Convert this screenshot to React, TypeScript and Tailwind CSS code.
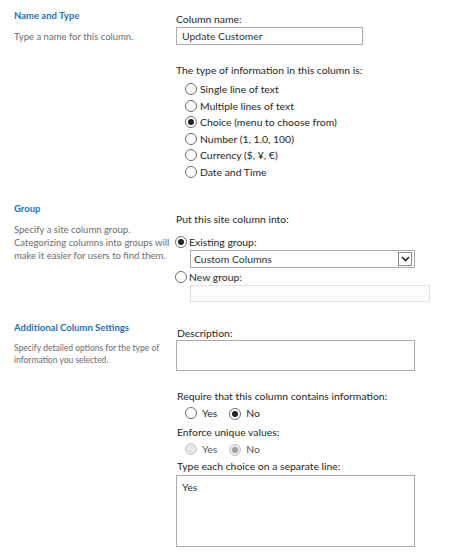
import React from 'react';

const font = { fontFamily: 'Lato, "Open Sans", sans-serif' };

function Radio({ checked = false, disabled = false }: { checked?: boolean; disabled?: boolean }) {
  return (
    <span
      className={`inline-flex items-center justify-center w-[12px] h-[12px] rounded-full border shrink-0 ${
        disabled ? 'border-[#c6c6c6] bg-[#e6e6e6]' : 'border-[#6d6d6d] bg-white'
      }`}
    >
      {checked && (
        <span className={`w-[6px] h-[6px] rounded-full ${disabled ? 'bg-[#a0a0a0]' : 'bg-[#222]'}`} />
      )}
    </span>
  );
}

function SectionInfo({ title, desc, small = false }: { title: string; desc: string[]; small?: boolean }) {
  return (
    <div className="w-[176px] shrink-0 pl-[14px]">
      <div className="text-[9.5px] font-bold text-[#1a73c7] leading-[14px] whitespace-nowrap">{title}</div>
      <div
        className={`mt-[7px] text-[#6c6c6c] whitespace-nowrap ${
          small ? 'text-[8.5px] leading-[12px]' : 'text-[9.5px] leading-[13px]'
        }`}
      >
        {desc.map((d) => (
          <div key={d}>{d}</div>
        ))}
      </div>
    </div>
  );
}

export default function App() {
  const types = [
    'Single line of text',
    'Multiple lines of text',
    'Choice (menu to choose from)',
    'Number (1, 1.0, 100)',
    'Currency ($, ¥, €)',
    'Date and Time',
  ];

  return (
    <div className="w-[474px] h-[559px] bg-white text-[#262626] overflow-hidden" style={font}>
      {/* Name and Type */}
      <div className="flex pt-[9px]">
        <SectionInfo title="Name and Type" desc={['Type a name for this column.']} />
        <div className="flex-1 pt-[2px] text-[10.4px] leading-[16px] whitespace-nowrap">
          <div>Column name:</div>
          <div className="w-[187px] h-[18px] border border-[#ababab] px-[5px] leading-[16px] text-[#333]">
            Update Customer
          </div>
          <div className="mt-[17px]">The type of information in this column is:</div>
          <div className="mt-[3px] pl-[9px] flex flex-col">
            {types.map((t, i) => (
              <label key={t} className="flex items-center gap-[3px] h-[16.5px]">
                <Radio checked={i === 2} />
                <span>{t}</span>
              </label>
            ))}
          </div>
        </div>
      </div>

      {/* Group */}
      <div className="flex mt-[22px]">
        <SectionInfo
          title="Group"
          desc={[
            'Specify a site column group.',
            'Categorizing columns into groups will',
            'make it easier for users to find them.',
          ]}
        />
        <div className="flex-1 pt-[9px] text-[10.4px] leading-[16px] whitespace-nowrap">
          <div>Put this site column into:</div>
          <label className="mt-[7px] flex items-center gap-[2px] -ml-[1px]">
            <Radio checked />
            <span>Existing group:</span>
          </label>
          <div className="ml-[14px] w-[225px] h-[18px] border border-[#ababab] flex items-center justify-between pl-[3px] pr-[2px] text-[#333]">
            <span>Custom Columns</span>
            <span className="w-[14px] h-[14px] border border-[#8a8a8a] flex items-center justify-center bg-white">
              <svg width="9" height="6" viewBox="0 0 9 6">
                <path d="M1 1 L4.5 4.5 L8 1" fill="none" stroke="#222" strokeWidth="1.6" />
              </svg>
            </span>
          </div>
          <label className="mt-[1px] flex items-center gap-[2px] -ml-[1px]">
            <Radio />
            <span>New group:</span>
          </label>
          <div className="ml-[14px] w-[240px] h-[17px] border border-[#e1e1e1] bg-[#fdfdfd]" />
        </div>
      </div>

      {/* Additional Column Settings */}
      <div className="flex mt-[19px]">
        <SectionInfo
          title="Additional Column Settings"
          desc={['Specify detailed options for the type of', 'information you selected.']}
          small
        />
        <div className="flex-1 pt-[4px] text-[10.4px] leading-[16px] whitespace-nowrap">
          <div className="ml-[1px]">Description:</div>
          <div className="w-[239px] h-[31px] border border-[#ababab] -mt-[1px]" />
          <div className="mt-[17px] ml-[1px]">Require that this column contains information:</div>
          <div className="pl-[9px] flex items-center h-[17px]">
            <Radio />
            <span className="ml-[5px]">Yes</span>
            <span className="ml-[12px]"><Radio checked /></span>
            <span className="ml-[5px]">No</span>
          </div>
          <div className="mt-[3px] ml-[1px]">Enforce unique values:</div>
          <div className="pl-[9px] flex items-center h-[17px] text-[#555]">
            <Radio disabled />
            <span className="ml-[5px]">Yes</span>
            <span className="ml-[12px]"><Radio checked disabled /></span>
            <span className="ml-[5px]">No</span>
          </div>
          <div className="mt-[1px] ml-[1px]">Type each choice on a separate line:</div>
          <div className="w-[239px] h-[72px] border border-[#ababab] mt-[1px] px-[5px] pt-[3px] text-[#333]">
            Yes
          </div>
        </div>
      </div>
    </div>
  );
}
